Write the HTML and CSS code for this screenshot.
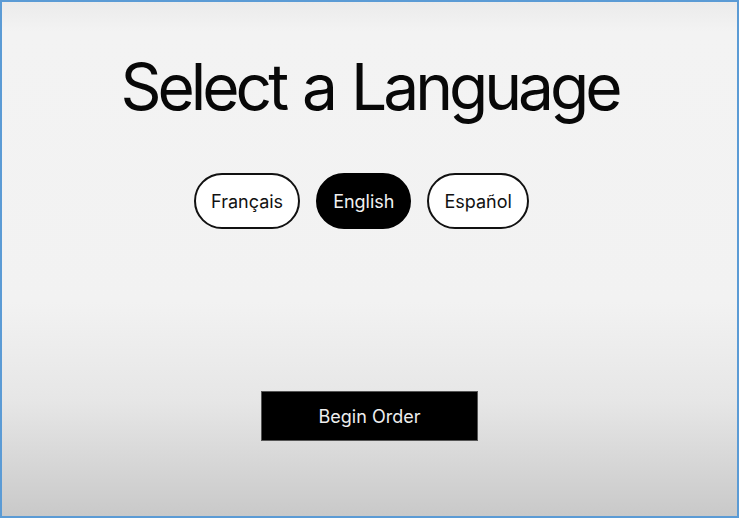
FILE: index.html
```html
<!DOCTYPE html>
<html lang="en">
<head>
<meta charset="utf-8">
<title>Select a Language</title>
<link rel="stylesheet" href="styles.css">
</head>
<body>
<div class="frame">
  <h1 class="title">Select a Language</h1>
  <div class="langs">
    <button class="pill">Français</button>
    <button class="pill pill-active">English</button>
    <button class="pill">Español</button>
  </div>
  <button class="begin">Begin Order</button>
</div>
</body>
</html>
```
FILE: styles.css
```css
html, body {
  margin: 0;
  padding: 0;
}
body {
  width: 739px;
  height: 518px;
  overflow: hidden;
  font-family: Inter, "Liberation Sans", sans-serif;
}
.frame {
  box-sizing: border-box;
  width: 739px;
  height: 518px;
  border: 2px solid #5b9bd5;
  background: linear-gradient(to bottom, #ebebeb 0px, #f3f3f3 30px, #f2f2f2 300px, #e6e6e6 400px, #c9c9c9 100%);
  display: flex;
  flex-direction: column;
  align-items: center;
  padding-top: 52px;
}
.title {
  margin: 0;
  font-size: 64px;
  line-height: 66px;
  font-weight: 400;
  color: #080808;
  letter-spacing: -4px;
  word-spacing: 3px;
}
.langs {
  margin-top: 53px;
  margin-right: 16px;
  display: flex;
  gap: 16px;
}
.pill {
  height: 56px;
  padding: 0 15px;
  border: 2px solid #111;
  border-radius: 28px;
  background: #fff;
  color: #111;
  font-family: Inter, "Liberation Sans", sans-serif;
  font-size: 18px;
}
.pill-active {
  background: #000;
  color: #f2f2f2;
  border-color: #000;
}
.begin {
  margin-top: 162px;
  width: 217px;
  height: 50px;
  background: #000;
  color: #eee;
  border: 1px solid #555;
  font-family: Inter, "Liberation Sans", sans-serif;
  font-size: 18px;
}
```
